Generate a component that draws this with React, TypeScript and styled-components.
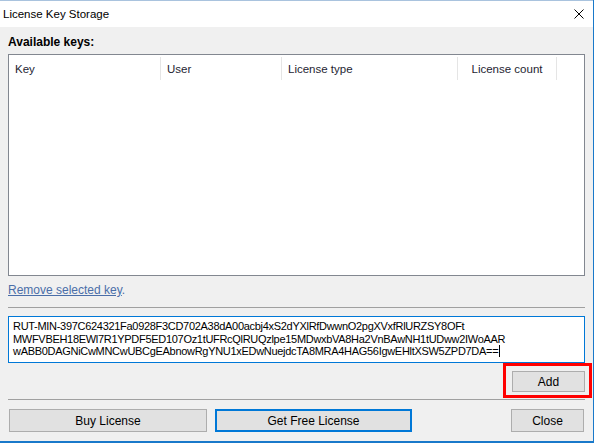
import React from "react";
import styled, { createGlobalStyle } from "styled-components";

const GlobalStyle = createGlobalStyle`
  html, body {
    margin: 0;
    padding: 0;
    background: #ffffff;
  }
  * {
    box-sizing: border-box;
  }
`;

const Window = styled.div`
  width: 594px;
  height: 443px;
  display: flex;
  flex-direction: column;
  background: #f0f0f0;
  border-right: 1px solid #1979ca;
  border-bottom: 2px solid #1979ca;
  font-family: "Liberation Sans", Arial, sans-serif;
  font-size: 12px;
  color: #000;
`;

const TitleBar = styled.div`
  height: 27px;
  flex: none;
  display: flex;
  align-items: center;
  justify-content: space-between;
  background: #ffffff;
  border-top: 1px solid #a9c3de;
  padding: 0 9px 0 3px;
`;

const Title = styled.span`
  font-size: 11.5px;
  color: #000;
`;

const CloseGlyph = styled.svg`
  width: 10px;
  height: 10px;
  display: block;
`;

const Body = styled.div`
  flex: 1;
  display: flex;
  flex-direction: column;
  padding: 0 8px;
`;

const SectionLabel = styled.div`
  margin-top: 8px;
  line-height: 15px;
  font-weight: bold;
`;

const ListView = styled.div`
  margin-top: 4px;
  height: 222px;
  background: #ffffff;
  border: 1px solid #828790;
`;

const HeaderRow = styled.div`
  display: flex;
  height: 25px;
  background: #ffffff;
`;

const HeaderCell = styled.div<{ $w: number; $center?: boolean }>`
  width: ${(p) => p.$w}px;
  flex: none;
  display: flex;
  align-items: center;
  justify-content: ${(p) => (p.$center ? "center" : "flex-start")};
  padding: 0 ${(p) => (p.$center ? 0 : 6)}px;
  margin: 2px 0 0;
  border-right: 1px solid #e5e5e5;
  color: #1e1e32;
  font-size: 11.5px;
`;

const LinkLine = styled.div`
  margin-top: 7px;
  line-height: 15px;
  color: #4a6ea8;
`;

const Link = styled.span`
  text-decoration: underline;
  cursor: pointer;
`;

const Rule = styled.div<{ $top: number }>`
  margin-top: ${(p) => p.$top}px;
  height: 1px;
  background: #a0a0a0;
`;

const KeyBox = styled.div`
  margin-top: 8px;
  height: 47px;
  background: #ffffff;
  border: 1px solid #0078d7;
  padding: 3px 4px;
  font-size: 11px;
  letter-spacing: -0.3px;
  line-height: 12.5px;
  color: #000;
  white-space: nowrap;
  overflow: hidden;
`;

const Caret = styled.span`
  display: inline-block;
  width: 1px;
  height: 12px;
  margin-left: 1px;
  background: #000;
  vertical-align: -2px;
`;

const AddRow = styled.div`
  margin-top: 8px;
  display: flex;
  justify-content: flex-end;
`;

const Highlight = styled.div`
  position: relative;
`;

const RedFrame = styled.div`
  position: absolute;
  left: -9px;
  top: -8px;
  right: -7px;
  bottom: -6px;
  border: 3px solid #ff0000;
  pointer-events: none;
`;

const Button = styled.button<{ $w: number; $h?: number; $focused?: boolean }>`
  width: ${(p) => p.$w}px;
  height: ${(p) => p.$h ?? 23}px;
  flex: none;
  background: #e1e1e1;
  border: ${(p) => (p.$focused ? "2px solid #0078d7" : "1px solid #adadad")};
  font-family: "Liberation Sans", Arial, sans-serif;
  font-size: 12px;
  color: #000;
  padding: 0;
  margin: 0;
`;

const FooterRow = styled.div`
  margin-top: 9px;
  display: flex;
  gap: 8px;
  padding-left: 1px;
  padding-right: 1px;
`;

const Spacer = styled.div`
  flex: 1;
`;

const keyLines = [
  "RUT-MIN-397C624321Fa0928F3CD702A38dA00acbj4xS2dYXlRfDwwnO2pgXVxfRlURZSY8OFt",
  "MWFVBEH18EWl7R1YPDF5ED107Oz1tUFRcQlRUQzlpe15MDwxbVA8Ha2VnBAwNH1tUDww2IWoAAR",
  "wABB0DAGNiCwMNCwUBCgEAbnowRgYNU1xEDwNuejdcTA8MRA4HAG56IgwEHltXSW5ZPD7DA==",
];

const columns = [
  { label: "Key", w: 152 },
  { label: "User", w: 121 },
  { label: "License type", w: 176 },
  { label: "License count", w: 99, center: true },
];

export default function App() {
  return (
    <>
      <GlobalStyle />
      <Window>
        <TitleBar>
          <Title>License Key Storage</Title>
          <CloseGlyph viewBox="0 0 10 10">
            <path d="M0.5 0.5L9.5 9.5M9.5 0.5L0.5 9.5" stroke="#000" strokeWidth="1" fill="none" />
          </CloseGlyph>
        </TitleBar>
        <Body>
          <SectionLabel>Available keys:</SectionLabel>
          <ListView>
            <HeaderRow>
              {columns.map((c) => (
                <HeaderCell key={c.label} $w={c.w} $center={c.center}>
                  {c.label}
                </HeaderCell>
              ))}
            </HeaderRow>
          </ListView>
          <LinkLine>
            <Link>Remove selected key</Link>.
          </LinkLine>
          <Rule $top={9} />
          <KeyBox>
            <div>{keyLines[0]}</div>
            <div>{keyLines[1]}</div>
            <div>
              {keyLines[2]}
              <Caret />
            </div>
          </KeyBox>
          <AddRow>
            <Highlight>
              <Button $w={73} $h={21}>Add</Button>
              <RedFrame />
            </Highlight>
          </AddRow>
          <Rule $top={7} />
          <FooterRow>
            <Button $w={198}>Buy License</Button>
            <Button $w={197} $focused>Get Free License</Button>
            <Spacer />
            <Button $w={73}>Close</Button>
          </FooterRow>
        </Body>
      </Window>
    </>
  );
}
